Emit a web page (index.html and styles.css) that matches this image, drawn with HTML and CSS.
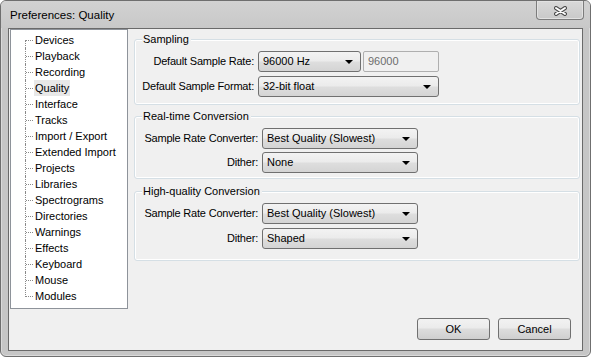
FILE: index.html
```html
<!DOCTYPE html>
<html lang="en">
<head>
  <meta charset="UTF-8" />
  <title>Preferences: Quality</title>
  <link rel="stylesheet" href="styles.css">
</head>
<body>

  <div class="window">

    <!-- TITLE BAR -->
    <div class="titlebar">
      <span class="title">Preferences: Quality</span>
      <div class="close">
        <svg width="13" height="10" viewBox="0 0 13 10">
          <path d="M2 2 L11 8 M11 2 L2 8" stroke="#4b4b4b" stroke-width="4" stroke-linecap="round"/>
          <path d="M2 2 L11 8 M11 2 L2 8" stroke="#fff" stroke-width="2" stroke-linecap="round"/>
        </svg>
      </div>
    </div>

    <div class="client">
      <div class="main">

        <!-- TREE -->
        <ul class="tree">
          <li><span>Devices</span></li>
          <li><span>Playback</span></li>
          <li><span>Recording</span></li>
          <li class="selected"><span>Quality</span></li>
          <li><span>Interface</span></li>
          <li><span>Tracks</span></li>
          <li><span>Import / Export</span></li>
          <li><span>Extended Import</span></li>
          <li><span>Projects</span></li>
          <li><span>Libraries</span></li>
          <li><span>Spectrograms</span></li>
          <li><span>Directories</span></li>
          <li><span>Warnings</span></li>
          <li><span>Effects</span></li>
          <li><span>Keyboard</span></li>
          <li><span>Mouse</span></li>
          <li><span>Modules</span></li>
        </ul>

        <!-- SETTINGS -->
        <div class="pane">
          <fieldset class="group group-sampling">
            <legend>Sampling</legend>
            <div class="grid">
              <label>Default Sample Rate:</label>
              <div class="pair">
                <div class="combo combo-rate"><span>96000 Hz</span><i class="arrow"></i></div>
                <div class="textbox">96000</div>
              </div>
              <label>Default Sample Format:</label>
              <div class="combo combo-format"><span>32-bit float</span><i class="arrow"></i></div>
            </div>
          </fieldset>

          <fieldset class="group group-realtime">
            <legend>Real-time Conversion</legend>
            <div class="grid">
              <label>Sample Rate Converter:</label>
              <div class="combo"><span>Best Quality (Slowest)</span><i class="arrow"></i></div>
              <label>Dither:</label>
              <div class="combo"><span>None</span><i class="arrow"></i></div>
            </div>
          </fieldset>

          <fieldset class="group group-hq">
            <legend>High-quality Conversion</legend>
            <div class="grid">
              <label>Sample Rate Converter:</label>
              <div class="combo"><span>Best Quality (Slowest)</span><i class="arrow"></i></div>
              <label>Dither:</label>
              <div class="combo"><span>Shaped</span><i class="arrow"></i></div>
            </div>
          </fieldset>
        </div>

      </div>

      <div class="buttons">
        <button class="btn">OK</button>
        <button class="btn">Cancel</button>
      </div>
    </div>

  </div>

</body>
</html>
```

FILE: styles.css
```css
* {
  box-sizing: border-box;
}

body {
  margin: 0;
  background: #fff;
  font-family: 'Liberation Sans', Arial, sans-serif;
  font-size: 11px;
  color: #000;
}

.window {
  width: 591px;
  height: 357px;
  border: 1px solid #6f6f6f;
  border-radius: 6px;
  background: #c6c6c6;
  box-shadow: inset 0 0 0 1px #dadada;
  display: flex;
  flex-direction: column;
}

.titlebar {
  height: 27px;
  display: flex;
  justify-content: space-between;
  align-items: flex-start;
  padding: 0 6px 0 9px;
  background: linear-gradient(to bottom, #d2d2d2, #c8c8c8);
  border-radius: 5px 5px 0 0;
}

.title {
  margin-top: 7px;
  line-height: 14px;
  font-size: 11.5px;
}

.close {
  width: 48px;
  height: 19px;
  border: 1px solid #7c7c7c;
  border-top: none;
  border-radius: 0 0 4px 4px;
  background: linear-gradient(to bottom, #d9d9d9, #c9c9c9);
  box-shadow: inset 0 0 0 1px #e2e2e2;
  display: flex;
  justify-content: center;
  align-items: center;
  padding-top: 2px;
}

.client {
  margin: 0 7px;
  height: 323px;
  border: 1px solid #6a6a6a;
  background: #f0f0f0;
  display: flex;
  flex-direction: column;
}

.main {
  height: 280px;
  display: flex;
}

/* TREE */

.tree {
  list-style: none;
  margin: 0 0 0 1px;
  padding: 2px 0 0;
  width: 118px;
  height: 280px;
  background: #fff;
  border: 1px solid #8e939a;
}

.tree li {
  position: relative;
  height: 16px;
  line-height: 16px;
  padding-left: 23px;
  white-space: nowrap;
}

.tree li span {
  padding: 0 1px;
  display: inline-block;
}

.tree li.selected span {
  background: #e8e8e8;
}

.tree li::before {
  content: '';
  position: absolute;
  left: 14px;
  top: 0;
  bottom: 0;
  border-left: 1px dotted #8a8a8a;
}

.tree li:first-child::before {
  top: 8px;
}

.tree li:last-child::before {
  bottom: 7px;
}

.tree li::after {
  content: '';
  position: absolute;
  left: 15px;
  top: 8px;
  width: 7px;
  border-top: 1px dotted #8a8a8a;
}

/* GROUPS */

.pane {
  flex: 1;
  padding: 4px 2px 0 6px;
  display: flex;
  flex-direction: column;
}

.group {
  margin: 0;
  min-width: 0;
  border: 1px solid #d5dfe5;
  border-radius: 3px;
  box-shadow: inset 0 0 0 1px #fff;
  padding: 5px 0 7px 7px;
}

.group legend {
  padding: 0 2px 0 1px;
  line-height: 13px;
  background: #f0f0f0;
}

.group-realtime {
  margin-top: 5px;
  padding-bottom: 5px;
}

.group-hq {
  margin-top: 6px;
  padding-bottom: 11px;
}

.grid {
  display: grid;
  grid-template-columns: 116px auto;
  column-gap: 4px;
  row-gap: 4px;
  justify-content: start;
}

.group-sampling .grid {
  grid-template-columns: 112px auto;
}

.group-realtime .grid {
  row-gap: 3px;
}

.grid label {
  text-align: right;
  line-height: 21px;
  white-space: nowrap;
  letter-spacing: -0.2px;
}

.pair {
  display: flex;
  gap: 2px;
}

.combo {
  position: relative;
  width: 156px;
  height: 21px;
  border: 1px solid #707070;
  border-radius: 3px;
  background: linear-gradient(to bottom, #f3f3f3, #ebebeb 48%, #dedede 52%, #d4d4d4);
  line-height: 19px;
  padding-left: 4px;
  white-space: nowrap;
}

.combo-rate {
  width: 103px;
}

.combo-format {
  width: 181px;
}

.arrow {
  position: absolute;
  right: 7px;
  top: 8px;
  border-left: 4px solid transparent;
  border-right: 4px solid transparent;
  border-top: 4px solid #000;
}

.textbox {
  width: 76px;
  height: 21px;
  border: 1px solid #afafaf;
  border-radius: 2px;
  background: #f0f0f0;
  color: #6d6d6d;
  line-height: 19px;
  padding-left: 4px;
}

/* BUTTONS */

.buttons {
  margin-top: 9px;
  display: flex;
  justify-content: flex-end;
  gap: 8px;
  padding-right: 11px;
}

.btn {
  width: 73px;
  height: 22px;
  border: 1px solid #707070;
  border-radius: 3px;
  background: linear-gradient(to bottom, #f2f2f2, #ebebeb 45%, #dddddd 50%, #cfcfcf);
  font-family: inherit;
  font-size: 11px;
  color: #000;
  padding: 0;
}
```
